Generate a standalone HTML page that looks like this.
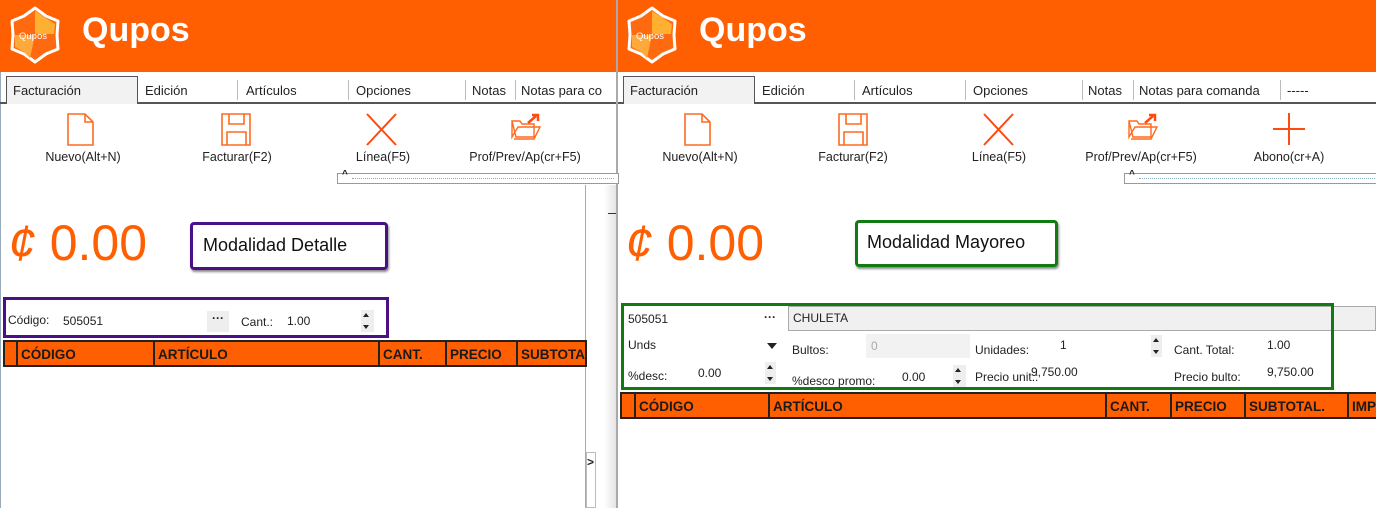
<!DOCTYPE html>
<html><head><meta charset="utf-8">
<style>
*{margin:0;padding:0;box-sizing:border-box}
body{width:1376px;height:508px;overflow:hidden;background:#fff;font-family:"Liberation Sans",sans-serif;position:relative;color:#222}
.a{position:absolute;white-space:nowrap}
.hdr{position:absolute;top:0;height:72px;background:#ff5f00}
.brand{position:absolute;top:11px;font-size:34px;font-weight:bold;color:#fff}
.tab{position:absolute;top:83px;font-size:13px;color:#222}
.sep{position:absolute;top:80px;width:1px;height:20px;background:#bbb}
.lbl{position:absolute;top:150px;font-size:12.5px;color:#222;transform:translateX(-50%)}
.big{position:absolute;top:214px;font-size:50px;color:#ff5f00}
.gh{position:absolute;height:27px;background:#ff5f00;border:2px solid #222;display:flex;overflow:hidden}
.gh div{flex-shrink:0;border-right:2px solid #222;font-weight:bold;font-size:13.5px;color:#1a1a1a;padding:5px 0 0 3px;overflow:hidden;white-space:nowrap}
.s{font-size:12px;color:#222}
.strip{position:absolute;top:173px;height:11px;border:1px solid #999;background:#fff}
.strip i{position:absolute;left:14px;right:4px;top:4px;border-top:1px dotted #8ab}
.spin{position:absolute;width:11px;height:22px;background:#eee}
.spin:before{content:"";position:absolute;left:2px;top:3px;border:3.5px solid transparent;border-bottom:4px solid #222;border-top:0}
.spin:after{content:"";position:absolute;left:2px;bottom:3px;border:3.5px solid transparent;border-top:4px solid #222;border-bottom:0}
</style></head><body>

<!-- LEFT -->
<div class="hdr" style="left:0;width:616px"></div>
<svg class="a" style="left:2px;top:2px" width="66" height="66" viewBox="0 0 66 66">
<polygon points="33,6 44,14 56,19 55,33 56,47 44,52 33,60 22,52 10,47 11,33 10,19 22,14" fill="#ff6a10" stroke="#fff" stroke-width="3" stroke-linejoin="round"/>
<path d="M33 9 L53 22 L52 32 L33 32Z" fill="#ffb030"/><path d="M13 33 L33 33 L28 56 L22 50 L13 45Z" fill="#ffa93a"/>
<text x="17" y="37" font-size="9.5" fill="#fff" font-family="Liberation Sans">Qupos</text></svg>
<div class="brand" style="left:82px">Qupos</div>
<div class="a" style="left:616px;top:0;width:2px;height:508px;background:#aaa"></div>
<div class="a" style="left:0;top:72px;width:1px;height:436px;background:#9ab"></div>
<div class="a" style="left:0;top:102px;width:616px;height:2px;background:#555"></div>
<div class="a" style="left:6px;top:76px;width:132px;height:28px;border:1px solid #555;border-bottom:none;background:#f2f2f2"></div>
<div class="tab" style="left:13px">Facturación</div>
<div class="tab" style="left:145px">Edición</div><div class="sep" style="left:237px"></div>
<div class="tab" style="left:246px">Artículos</div><div class="sep" style="left:348px"></div>
<div class="tab" style="left:356px">Opciones</div><div class="sep" style="left:465px"></div>
<div class="tab" style="left:472px">Notas</div><div class="sep" style="left:515px"></div>
<div class="tab" style="left:521px">Notas para co</div>

<svg class="a" style="left:65px;top:113px" width="36" height="34"><path d="M3 1 H20 L28 9 V32 H3Z M20 1 V9 H28" fill="none" stroke="#ff6a20" stroke-width="1.6"/></svg>
<svg class="a" style="left:220px;top:112px" width="36" height="34"><path d="M2 2 H30 V33 H2Z M9 2 V12 H24 V2 M7 33 V20 H26 V33" fill="none" stroke="#ff6a20" stroke-width="1.6"/></svg>
<svg class="a" style="left:365px;top:112px" width="36" height="36"><path d="M2 2 L31 33 M31 2 L2 33" stroke="#ff4a10" stroke-width="2"/></svg>
<svg class="a" style="left:510px;top:113px" width="36" height="30"><path d="M2 8 H10 L12 11 H24 V24 H6Z M2 8 V24 L8 14 H30 L24 26 H4" fill="none" stroke="#ff6a20" stroke-width="1.4"/><path d="M18 10 L26 3 M22 2 H28 V8" stroke="#ff4a10" stroke-width="2.5" fill="none"/></svg>
<div class="lbl" style="left:83px">Nuevo(Alt+N)</div>
<div class="lbl" style="left:237px">Facturar(F2)</div>
<div class="lbl" style="left:383px">Línea(F5)</div>
<div class="lbl" style="left:525px">Prof/Prev/Ap(cr+F5)</div>
<div class="strip" style="left:337px;width:282px"><i></i><span class="a" style="left:4px;top:-5px;font-size:10px;font-weight:bold">^</span></div>
<div class="a" style="left:585px;top:185px;width:1px;height:323px;background:#aaa"></div>
<div class="a" style="left:586px;top:185px;width:30px;height:323px;background:linear-gradient(90deg,#fff,#fff 60%,#e4e4e4)"></div>
<div class="a" style="left:608px;top:213px;width:8px;height:1px;background:#333"></div>
<div class="a" style="left:586px;top:452px;width:10px;height:56px;border:1px solid #bbb;background:#fff"></div>
<div class="a" style="left:587px;top:455px;font-size:12px;font-weight:bold">&gt;</div>

<div class="big" style="left:8px"><i style="font-style:italic">¢</i> 0.00</div>
<div class="a" style="left:190px;top:222px;width:198px;height:48px;border:3px solid #4b0f87;border-radius:4px;box-shadow:1px 2px 2px #888"></div>
<div class="a" style="left:203px;top:235px;font-size:18px;color:#111">Modalidad Detalle</div>
<div class="a" style="left:3px;top:297px;width:386px;height:41px;border:3px solid #4b0f87"></div>
<div class="a s" style="left:8px;top:313px">Código:</div>
<div class="a s" style="left:63px;top:314px">505051</div>
<div class="a" style="left:207px;top:311px;width:22px;height:21px;background:#eee;font-weight:bold;font-size:12px;text-align:center">···</div>
<div class="a s" style="left:241px;top:315px">Cant.:</div>
<div class="a s" style="left:287px;top:314px">1.00</div>
<div class="spin" style="left:361px;top:310px;width:13px"></div>
<div class="gh" style="left:3px;top:340px;width:584px">
<div style="width:13px;padding:0"></div><div style="width:137px">CÓDIGO</div><div style="width:225px">ARTÍCULO</div><div style="width:67px">CANT.</div><div style="width:71px">PRECIO</div><div style="width:70px;border:none">SUBTOTA</div></div>

<!-- RIGHT -->
<div class="hdr" style="left:618px;width:758px"></div>
<svg class="a" style="left:619px;top:2px" width="66" height="66" viewBox="0 0 66 66">
<polygon points="33,6 44,14 56,19 55,33 56,47 44,52 33,60 22,52 10,47 11,33 10,19 22,14" fill="#ff6a10" stroke="#fff" stroke-width="3" stroke-linejoin="round"/>
<path d="M33 9 L53 22 L52 32 L33 32Z" fill="#ffb030"/><path d="M13 33 L33 33 L28 56 L22 50 L13 45Z" fill="#ffa93a"/>
<text x="17" y="37" font-size="9.5" fill="#fff" font-family="Liberation Sans">Qupos</text></svg>
<div class="brand" style="left:699px">Qupos</div>
<div class="a" style="left:618px;top:102px;width:758px;height:2px;background:#555"></div>
<div class="a" style="left:623px;top:76px;width:132px;height:28px;border:1px solid #555;border-bottom:none;background:#f2f2f2"></div>
<div class="tab" style="left:630px">Facturación</div>
<div class="tab" style="left:762px">Edición</div><div class="sep" style="left:854px"></div>
<div class="tab" style="left:862px">Artículos</div><div class="sep" style="left:965px"></div>
<div class="tab" style="left:973px">Opciones</div><div class="sep" style="left:1082px"></div>
<div class="tab" style="left:1088px">Notas</div><div class="sep" style="left:1133px"></div>
<div class="tab" style="left:1139px">Notas para comanda</div><div class="sep" style="left:1280px"></div>
<div class="tab" style="left:1287px">-----</div>

<svg class="a" style="left:682px;top:113px" width="36" height="34"><path d="M3 1 H20 L28 9 V32 H3Z M20 1 V9 H28" fill="none" stroke="#ff6a20" stroke-width="1.6"/></svg>
<svg class="a" style="left:837px;top:112px" width="36" height="34"><path d="M2 2 H30 V33 H2Z M9 2 V12 H24 V2 M7 33 V20 H26 V33" fill="none" stroke="#ff6a20" stroke-width="1.6"/></svg>
<svg class="a" style="left:982px;top:112px" width="36" height="36"><path d="M2 2 L31 33 M31 2 L2 33" stroke="#ff4a10" stroke-width="2"/></svg>
<svg class="a" style="left:1127px;top:113px" width="36" height="30"><path d="M2 8 H10 L12 11 H24 V24 H6Z M2 8 V24 L8 14 H30 L24 26 H4" fill="none" stroke="#ff6a20" stroke-width="1.4"/><path d="M18 10 L26 3 M22 2 H28 V8" stroke="#ff4a10" stroke-width="2.5" fill="none"/></svg>
<svg class="a" style="left:1272px;top:112px" width="36" height="36"><path d="M17 1 V33 M1 17 H33" stroke="#ff4a10" stroke-width="2"/></svg>
<div class="lbl" style="left:700px">Nuevo(Alt+N)</div>
<div class="lbl" style="left:853px">Facturar(F2)</div>
<div class="lbl" style="left:999px">Línea(F5)</div>
<div class="lbl" style="left:1141px">Prof/Prev/Ap(cr+F5)</div>
<div class="lbl" style="left:1289px">Abono(cr+A)</div>
<div class="strip" style="left:1124px;width:256px"><i></i><span class="a" style="left:4px;top:-5px;font-size:10px;font-weight:bold">^</span></div>

<div class="big" style="left:625px"><i style="font-style:italic">¢</i> 0.00</div>
<div class="a" style="left:855px;top:220px;width:203px;height:47px;border:3px solid #127a12;border-radius:4px;box-shadow:1px 2px 2px #888"></div>
<div class="a" style="left:867px;top:232px;font-size:18px;color:#111">Modalidad Mayoreo</div>

<div class="a" style="left:788px;top:306px;width:588px;height:25px;background:#f0f0f0;border:1px solid #aaa"></div>
<div class="a" style="left:621px;top:303px;width:713px;height:87px;border:3px solid #127a12"></div>
<div class="a s" style="left:628px;top:312px">505051</div>
<div class="a s" style="left:764px;top:310px;font-weight:bold">···</div>
<div class="a s" style="left:793px;top:311px">CHULETA</div>
<div class="a s" style="left:628px;top:338px">Unds</div>
<div class="a" style="left:767px;top:343px;border:5px solid transparent;border-top:6px solid #222"></div>
<div class="a s" style="left:792px;top:343px">Bultos:</div>
<div class="a" style="left:866px;top:334px;width:104px;height:24px;background:#f2f2f2"></div>
<div class="a s" style="left:871px;top:339px;color:#aaa">0</div>
<div class="a s" style="left:975px;top:343px">Unidades:</div>
<div class="a s" style="left:1060px;top:338px">1</div>
<div class="spin" style="left:1151px;top:335px"></div>
<div class="a s" style="left:1174px;top:343px">Cant. Total:</div>
<div class="a s" style="left:1267px;top:338px">1.00</div>
<div class="a s" style="left:628px;top:369px">%desc:</div>
<div class="a s" style="left:698px;top:366px">0.00</div>
<div class="spin" style="left:765px;top:362px"></div>
<div class="a s" style="left:792px;top:374px">%desco promo:</div>
<div class="a s" style="left:902px;top:370px">0.00</div>
<div class="spin" style="left:953px;top:365px;width:13px"></div>
<div class="a s" style="left:975px;top:370px">Precio unit.:</div>
<div class="a s" style="left:1031px;top:365px">9,750.00</div>
<div class="a s" style="left:1174px;top:370px">Precio bulto:</div>
<div class="a s" style="left:1267px;top:365px">9,750.00</div>

<div class="gh" style="left:620px;top:392px;width:760px">
<div style="width:14px;padding:0"></div><div style="width:134px">CÓDIGO</div><div style="width:337px">ARTÍCULO</div><div style="width:65px">CANT.</div><div style="width:74px">PRECIO</div><div style="width:103px">SUBTOTAL.</div><div style="width:40px;border:none">IMP</div></div>
</body></html>
